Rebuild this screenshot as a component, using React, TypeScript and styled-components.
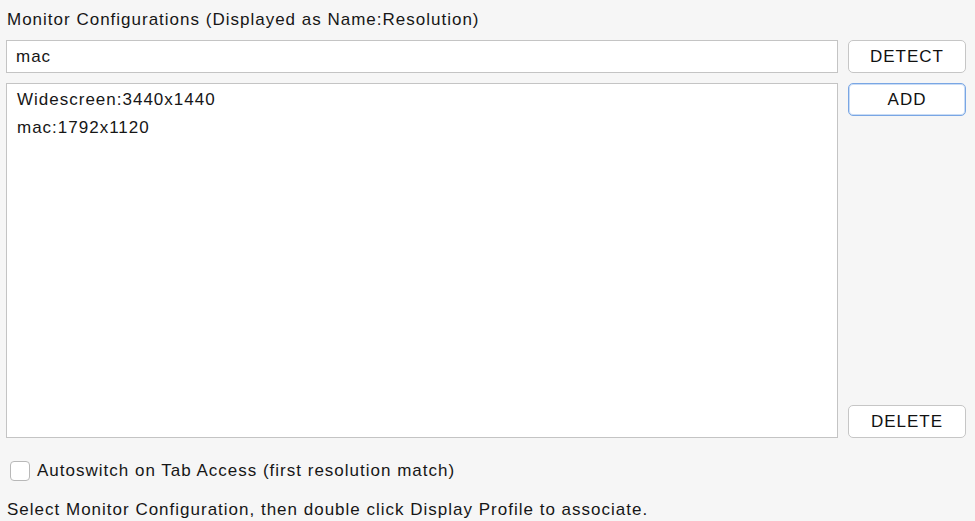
import React from "react";
import styled, { createGlobalStyle } from "styled-components";

const Global = createGlobalStyle`
  html, body { margin: 0; padding: 0; background: #f6f6f6; }
  body {
    font-family: "Liberation Sans", Arial, sans-serif;
    color: #161616;
    font-size: 17px;
    letter-spacing: 1px;
  }
`;

const Page = styled.div`
  width: 975px;
  height: 521px;
  box-sizing: border-box;
  padding: 9px 9px 0 6px;
  display: flex;
  flex-direction: column;
  overflow: hidden;
`;

const Title = styled.div`
  line-height: 21px;
  height: 21px;
  padding-left: 1px;
  margin-bottom: 10px;
`;

const Grid = styled.div`
  display: grid;
  grid-template-columns: 832px 118px;
  grid-template-rows: 33px 355px;
  column-gap: 10px;
  row-gap: 10px;
`;

const Input = styled.div`
  box-sizing: border-box;
  background: #fff;
  border: 1px solid #c4c4c4;
  line-height: 31px;
  padding-left: 9px;
`;

const List = styled.div`
  box-sizing: border-box;
  background: #fff;
  border: 1px solid #c4c4c4;
  padding-top: 2px;
  padding-left: 10px;
`;

const Item = styled.div`
  line-height: 28px;
`;

const Side = styled.div`
  display: flex;
  flex-direction: column;
  justify-content: space-between;
`;

const Button = styled.button<{ $focused?: boolean }>`
  box-sizing: border-box;
  width: 118px;
  height: 33px;
  background: #fff;
  border: 1px solid ${(p) => (p.$focused ? "#79a6e4" : "#c6c6c6")};
  box-shadow: ${(p) => (p.$focused ? "inset 0 0 0 1px #c9dcf5" : "none")};
  border-radius: 5px;
  font-family: "Liberation Sans", Arial, sans-serif;
  font-size: 17px;
  letter-spacing: 1px;
  color: #111;
  padding: 0;
  cursor: default;
`;

const CheckRow = styled.label`
  display: flex;
  align-items: center;
  gap: 7px;
  margin-top: 23px;
  padding-left: 4px;
  height: 20px;
`;

const Box = styled.span`
  box-sizing: border-box;
  width: 20px;
  height: 20px;
  border: 1px solid #b8b8b8;
  border-radius: 4px;
  background: #fff;
  display: inline-block;
`;

const Footer = styled.div`
  line-height: 20px;
  margin-top: 19px;
  padding-left: 1px;
`;

export default function App() {
  return (
    <>
      <Global />
      <Page>
        <Title>Monitor Configurations (Displayed as Name:Resolution)</Title>
        <Grid>
          <Input>mac</Input>
          <Button>DETECT</Button>
          <List>
            <Item>Widescreen:3440x1440</Item>
            <Item>mac:1792x1120</Item>
          </List>
          <Side>
            <Button $focused>ADD</Button>
            <Button>DELETE</Button>
          </Side>
        </Grid>
        <CheckRow>
          <Box />
          Autoswitch on Tab Access (first resolution match)
        </CheckRow>
        <Footer>Select Monitor Configuration, then double click Display Profile to associate.</Footer>
      </Page>
    </>
  );
}
